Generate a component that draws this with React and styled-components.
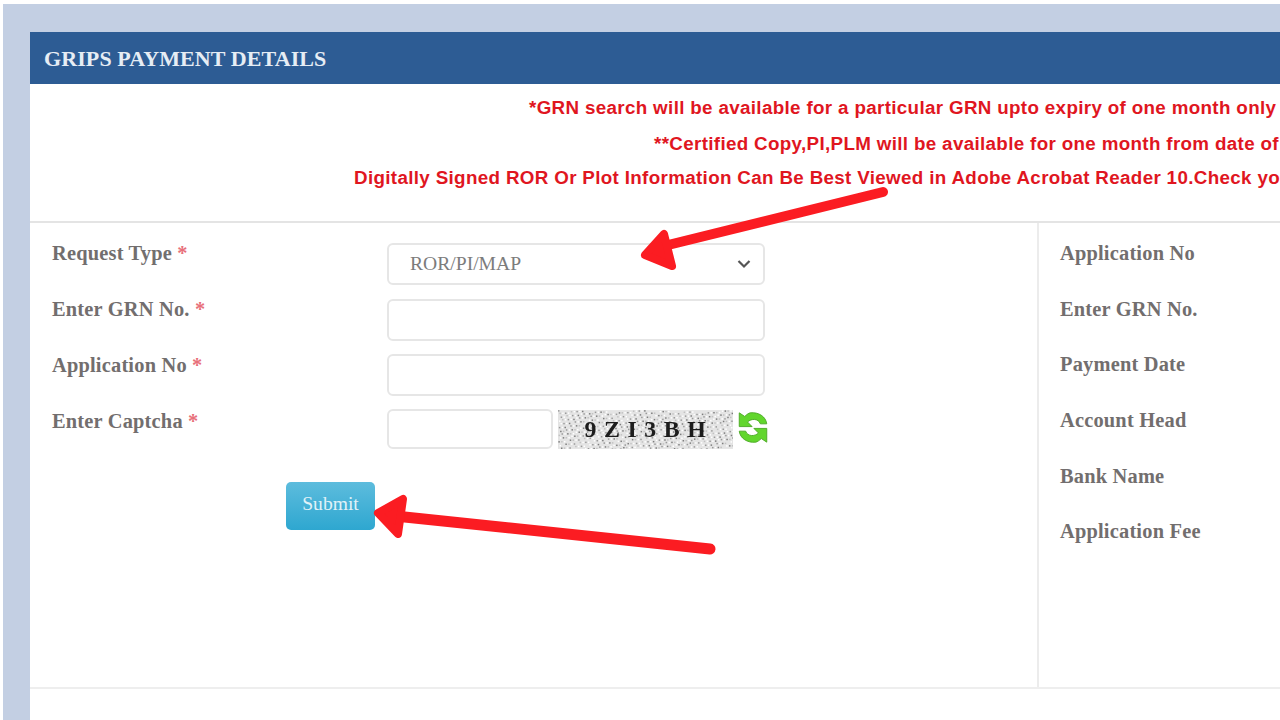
import styled, { createGlobalStyle } from 'styled-components';

const GlobalStyle = createGlobalStyle`
  html, body {
    margin: 0;
    padding: 0;
    width: 1280px;
    height: 720px;
    overflow: hidden;
    background: #ffffff;
    font-family: "Liberation Serif", "Times New Roman", serif;
  }
`;

const Page = styled.div`
  position: relative;
  width: 1277px;
  height: 716px;
  margin: 4px 0 0 3px;
  padding: 28px 0 0 27px;
  box-sizing: border-box;
  background: #c3cfe3;
  overflow: hidden;
`;

const Panel = styled.div`
  width: 1250px;
  height: 688px;
  background: #ffffff;
`;

const Heading = styled.div`
  height: 52px;
  padding: 1px 0 0 14px;
  box-sizing: border-box;
  display: flex;
  align-items: center;
  background: #2d5c94;
  color: #e6edf4;
  font-size: 22px;
  font-weight: 700;
  letter-spacing: 0.1px;
`;

const Notices = styled.div`
  height: 139px;
  padding-top: 13px;
  box-sizing: border-box;
  border-bottom: 2px solid #e4e4e4;
`;

const Notice = styled.p`
  margin: ${(p) => p.$top}px 0 0 ${(p) => p.$left}px;
  height: 22px;
  line-height: 22px;
  white-space: nowrap;
  color: #e0161f;
  font-family: "Liberation Sans", Arial, sans-serif;
  font-size: 18.8px;
  font-weight: 700;
  letter-spacing: 0.34px;
`;

const Columns = styled.div`
  display: flex;
  height: 464px;
`;

const FormColumn = styled.div`
  position: relative;
  width: 1009px;
  border-right: 2px solid #ececec;
  padding: 20px 0 0 22px;
  box-sizing: border-box;
`;

const FormRow = styled.div`
  display: flex;
  height: ${(p) => p.$height || 42}px;
  margin-bottom: ${(p) => p.$gap ?? 13.5}px;
`;

const Label = styled.label`
  width: 335px;
  padding-top: ${(p) => p.$top ?? 0}px;
  color: #726e6e;
  font-size: 20.4px;
  font-weight: 700;
  line-height: 20px;
  letter-spacing: 0.2px;
`;

const Star = styled.span`
  color: #e8707a;
`;

const Field = styled.div`
  width: 378px;
  height: 42px;
  padding: 0 12px 0 21px;
  box-sizing: border-box;
  display: flex;
  align-items: center;
  justify-content: space-between;
  background: #ffffff;
  border: 2px solid #e6e6e6;
  border-radius: 6px;
  color: #7c7c7c;
  font-size: 19.6px;
`;

const CaptchaGroup = styled.div`
  display: flex;
  align-items: center;
  margin-top: -1px;
`;

const CaptchaInput = styled.div`
  width: 166px;
  height: 40px;
  box-sizing: border-box;
  background: #ffffff;
  border: 2px solid #e6e6e6;
  border-radius: 6px;
`;

const CaptchaImage = styled.svg`
  display: block;
  width: 175px;
  height: 39px;
  margin-left: 5px;
  filter: blur(0.5px);
`;

const Refresh = styled.svg`
  display: block;
  width: 30px;
  height: 33px;
  margin: -3px 0 0 5px;
`;

const SubmitButton = styled.button`
  display: block;
  width: 89px;
  height: 48px;
  margin: 32.5px 0 0 234px;
  padding: 0 0 4px;
  border: 0;
  border-radius: 5px;
  background: linear-gradient(#5dbcdd, #2ea7d0);
  color: #e0f2f8;
  font-family: inherit;
  font-size: 19.6px;
`;

const DetailColumn = styled.div`
  padding: 20px 0 0 21px;
  display: flex;
  flex-direction: column;
  gap: 35.7px;
`;

const DetailLabel = styled.div`
  height: 20px;
  line-height: 20px;
  color: #726e6e;
  font-size: 20.4px;
  font-weight: 700;
  letter-spacing: 0.2px;
  white-space: nowrap;
`;

const FooterRule = styled.div`
  height: 2px;
  background: #eeeeee;
`;

const Annotations = styled.svg`
  position: absolute;
  left: -3px;
  top: -4px;
  width: 1280px;
  height: 720px;
  pointer-events: none;
`;

// fixed pseudo random specks for the captcha background
const specks = Array.from({ length: 620 }, (_, i) => {
  const a = (i * 7919) % 1000;
  const b = (i * 104729) % 997;
  return {
    x: (a / 1000) * 176,
    y: (b / 997) * 39,
    shade: ['#9a9a9a', '#ffffff', '#c2c2c2', '#7d7d7d', '#ffffff'][i % 5],
  };
});

const formRows = ['Request Type', 'Enter GRN No.', 'Application No'];
const details = [
  'Application No',
  'Enter GRN No.',
  'Payment Date',
  'Account Head',
  'Bank Name',
  'Application Fee',
];

const App = () => {
  return (
    <Page>
      <GlobalStyle />
      <Panel>
        <Heading>GRIPS PAYMENT DETAILS</Heading>
        <Notices>
          <Notice $top={0} $left={499}>
            *GRN search will be available for a particular GRN upto expiry of one month only
          </Notice>
          <Notice $top={14} $left={624}>
            **Certified Copy,PI,PLM will be available for one month from date of
          </Notice>
          <Notice $top={12} $left={324}>
            Digitally Signed ROR Or Plot Information Can Be Best Viewed in Adobe Acrobat Reader 10.Check yo
          </Notice>
        </Notices>
        <Columns>
          <FormColumn>
            {formRows.map((label, i) => (
              <FormRow key={label}>
                <Label $top={i * 0.5}>
                  {label} <Star>*</Star>
                </Label>
                {i === 0 ? (
                  <Field>
                    ROR/PI/MAP
                    <svg width="14" height="10" viewBox="0 0 14 10">
                      <path d="M1.5 2 L7 7.5 L12.5 2" fill="none" stroke="#555" strokeWidth="2.2" />
                    </svg>
                  </Field>
                ) : (
                  <Field />
                )}
              </FormRow>
            ))}
            <FormRow $height={40} $gap={0}>
              <Label $top={1.5}>
                Enter Captcha <Star>*</Star>
              </Label>
              <CaptchaGroup>
                <CaptchaInput />
                <CaptchaImage viewBox="0 0 176 39">
                  <rect width="176" height="39" fill="#e4e4e4" />
                  {specks.map((s, i) => (
                    <rect key={i} x={s.x} y={s.y} width="1.5" height="1.5" fill={s.shade} />
                  ))}
                  <text
                    x="88"
                    y="27"
                    textAnchor="middle"
                    fontFamily="Liberation Serif, serif"
                    fontWeight="700"
                    fontSize="24"
                    letterSpacing="0.8"
                    fill="#1c1c1c"
                  >
                    9 Z I 3 B H
                  </text>
                </CaptchaImage>
                <Refresh viewBox="0 0 32 36">
                  <path
                    d="M1 2 L1 17 L15 17 L10 12 C14 8 22 8 24 14 L31 14 C30 6 22 1 13 2 C11 2.5 9 4 7 6 Z"
                    fill="#62d62d"
                    stroke="#4aa824"
                    strokeWidth="1"
                    strokeLinejoin="round"
                  />
                  <path
                    d="M31 34 L31 19 L17 19 L22 24 C18 28 10 28 8 22 L1 22 C2 30 10 35 19 34 C21 33.5 23 32 25 30 Z"
                    fill="#62d62d"
                    stroke="#4aa824"
                    strokeWidth="1"
                    strokeLinejoin="round"
                  />
                </Refresh>
              </CaptchaGroup>
            </FormRow>
            <SubmitButton>Submit</SubmitButton>
          </FormColumn>
          <DetailColumn>
            {details.map((label) => (
              <DetailLabel key={label}>{label}</DetailLabel>
            ))}
          </DetailColumn>
        </Columns>
        <FooterRule />
      </Panel>
      <Annotations viewBox="0 0 1280 720">
        <g fill="#fb1c22" stroke="#fb1c22" strokeLinejoin="round" strokeLinecap="round">
          <path d="M883 192 L660 247" strokeWidth="10" fill="none" />
          <path d="M645 255 L664 234 L672 266 Z" strokeWidth="8" />
          <path d="M710 549 L395 516" strokeWidth="11" fill="none" />
          <path d="M378 513 L403 499 L398 534 Z" strokeWidth="8" />
        </g>
      </Annotations>
    </Page>
  );
};

export default App;
